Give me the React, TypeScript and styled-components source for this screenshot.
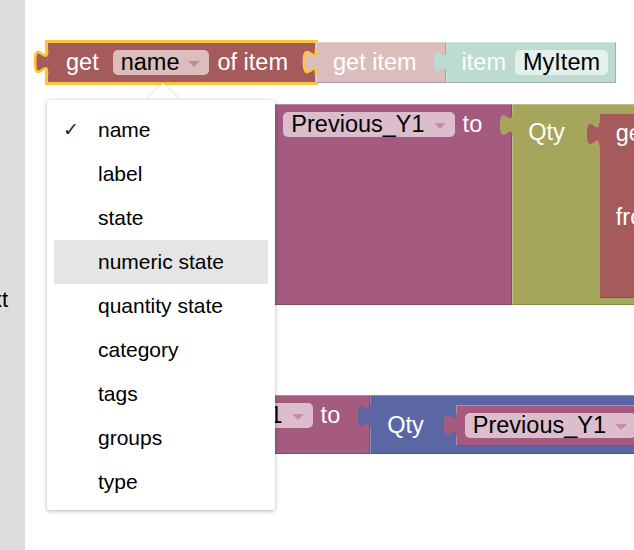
import React from 'react'
import styled, { createGlobalStyle, css } from 'styled-components'

const GlobalStyle = createGlobalStyle`
  html, body {
    margin: 0;
    padding: 0;
    background: #fff;
    overflow: hidden;
  }
  body {
    font-family: "Liberation Sans", Arial, sans-serif;
  }
`

const SELECT = '#fbc53c'

const Page = styled.div`
  display: flex;
  width: 634px;
  height: 550px;
  overflow: hidden;
`

const Toolbox = styled.div`
  width: 25px;
  flex-shrink: 0;
  background: #dddddd;
  padding-top: 288px;
  box-sizing: border-box;
  overflow: hidden;
`

const Category = styled.div`
  display: flex;
  justify-content: flex-end;
  padding-right: 17px;
  font-size: 22px;
  line-height: 24px;
  color: #000;
  white-space: nowrap;
`

const Workspace = styled.div`
  flex: 1;
  position: relative;
  z-index: 0;
  background: #fff;
  overflow: hidden;
`

// a stack of blocks, placed where it sits on the canvas
const Placed = styled.div<{ $x: number; $y: number }>`
  position: absolute;
  left: ${({ $x }) => $x}px;
  top: ${({ $y }) => $y}px;
  display: flex;
  align-items: stretch;
`

const Block = styled.div<{
  $color: string
  $h?: number
  $w?: number
  $selected?: boolean
  $align?: string
  $pad?: string
}>`
  position: relative;
  display: flex;
  align-items: ${({ $align }) => $align || 'center'};
  flex-shrink: 0;
  box-sizing: border-box;
  background: ${({ $color }) => $color};
  height: ${({ $h }) => ($h ? `${$h}px` : 'auto')};
  ${({ $w }) => $w && css`width: ${$w}px;`}
  padding: ${({ $pad }) => $pad || '0'};
  box-shadow: inset 1px 1px 0 rgba(255, 255, 255, 0.28),
    inset -1px -1px 0 rgba(0, 0, 0, 0.18);
  ${({ $selected }) =>
    $selected &&
    css`
      box-shadow: 0 0 0 2px ${SELECT}, inset 0 0 0 1px ${SELECT};
    `}
`

const Column = styled.div`
  display: flex;
  flex-direction: column;
`

const Label = styled.span<{ $ml?: number; $mt?: number }>`
  display: block;
  color: #fff;
  font-size: 23.5px;
  line-height: 25px;
  white-space: nowrap;
  margin-left: ${({ $ml }) => $ml || 0}px;
  margin-top: ${({ $mt }) => $mt || 0}px;
`

const Pill = styled.span<{ $bg: string; $ml?: number; $pr?: number }>`
  display: inline-flex;
  align-items: center;
  flex-shrink: 0;
  height: 25px;
  padding: 0 ${({ $pr }) => $pr ?? 9}px 0 8px;
  margin-left: ${({ $ml }) => $ml || 0}px;
  border-radius: 5px;
  background: ${({ $bg }) => $bg};
  color: #000;
  font-size: 23.5px;
  line-height: 25px;
  white-space: nowrap;
`

const Arrow = styled.span<{ $color: string }>`
  width: 0;
  height: 0;
  margin-left: 9px;
  margin-top: 2px;
  border-left: 6px solid transparent;
  border-right: 6px solid transparent;
  border-top: 6px solid ${({ $color }) => $color};
`

const TabSvg = styled.svg<{ $top: number }>`
  position: absolute;
  left: -12px;
  top: ${({ $top }) => $top}px;
  overflow: visible;
`

const Tab = ({ color, top = 8, stroke }: { color: string; top?: number; stroke?: string }) => (
  <TabSvg $top={top} width="12" height="24" viewBox="0 0 8 15">
    <path d="M8.6,0 L8,0 c0,10 -8,-8 -8,7.5 s8,-2.5 8,7.5 L8.6,15 Z" fill={color} />
    {stroke && (
      <path
        d="M8,-0.6 L8,0 c0,10 -8,-8 -8,7.5 s8,-2.5 8,7.5 L8,15.6"
        fill="none"
        stroke={stroke}
        strokeWidth="1.9"
      />
    )}
  </TabSvg>
)

const Menu = styled.div`
  position: absolute;
  left: 22px;
  top: 100px;
  width: 228px;
  z-index: 10;
`

const Notch = styled.div`
  position: absolute;
  left: 104px;
  top: -12px;
  width: 24px;
  height: 24px;
  background: #fff;
  transform: rotate(45deg);
  box-shadow: 0 0 3px rgba(0, 0, 0, 0.22);
`

const MenuList = styled.div`
  position: relative;
  background: #fff;
  border-radius: 3px;
  padding: 8px 7px 6px;
  box-shadow: 0 1px 4px rgba(0, 0, 0, 0.3);
`

const MenuItem = styled.div<{ $active?: boolean }>`
  position: relative;
  display: flex;
  align-items: center;
  height: 44px;
  padding-left: 44px;
  font-size: 21px;
  color: #000;
  background: ${({ $active }) => ($active ? '#e5e5e5' : 'transparent')};
`

const Check = styled.span`
  position: absolute;
  left: 9px;
  top: 10px;
  font-family: "DejaVu Sans", sans-serif;
  font-size: 19px;
  line-height: 22px;
  font-weight: bold;
  color: #222;
`

const RED = '#a55b5b'
const MAGENTA = '#a55b80'
const OLIVE = '#a5a55b'
const BLUE = '#5b67a5'
const RED_SHADOW = '#dbbdbd'
const TEAL_SHADOW = '#bddbd1'

const options = [
  'name',
  'label',
  'state',
  'numeric state',
  'quantity state',
  'category',
  'tags',
  'groups',
  'type',
]

const App = () => {
  return (
    <>
      <GlobalStyle />
      <Page>
        <Toolbox>
          <Category>Text</Category>
        </Toolbox>
        <Workspace>
          <Placed $x={22} $y={42}>
            <Block $color={RED} $h={41} $selected $pad="0 28px 0 0">
              <Tab color={RED} stroke={SELECT} />
              <Label $ml={19}>get</Label>
              <Pill $bg={RED_SHADOW} $ml={14}>
                name
                <Arrow $color="#c58c8c" />
              </Pill>
              <Label $ml={8}>of item</Label>
            </Block>
            <Block $color={RED_SHADOW} $h={41} $pad="0 29px 0 0">
              <Tab color={RED_SHADOW} stroke={SELECT} />
              <Label $ml={17}>get item</Label>
            </Block>
            <Block $color={TEAL_SHADOW} $h={41} $pad="0 8px 0 0">
              <Tab color={TEAL_SHADOW} />
              <Label $ml={16}>item</Label>
              <Pill $bg="#e4f0ec" $ml={9} $pr={8}>
                MyItem
              </Pill>
            </Block>
          </Placed>

          <Placed $x={196} $y={104}>
            <Block $color={MAGENTA} $align="flex-start" $pad="8px 30px 0 0">
              <Label $ml={16}>set</Label>
              <Pill $bg="#dbbdcc" $ml={15}>
                Previous_Y1
                <Arrow $color="#c88ca8" />
              </Pill>
              <Label $ml={8}>to</Label>
            </Block>
            <Block $color={OLIVE} $align="flex-start" $pad="9px 0 7px 0">
              <Tab color={OLIVE} top={9} />
              <Label $ml={16} $mt={7}>Qty</Label>
              <Block
                $color={RED}
                $h={185}
                $w={220}
                $align="flex-start"
                style={{ marginLeft: 34 }}
              >
                <Tab color={RED} top={9} />
                <Column>
                  <Label $ml={17} $mt={8}>get</Label>
                  <Label $ml={17} $mt={59}>from</Label>
                </Column>
              </Block>
            </Block>
          </Placed>

          <Placed $x={54} $y={395}>
            <Block $color={MAGENTA} $align="flex-start" $pad="8px 30px 0 0">
              <Label $ml={16}>set</Label>
              <Pill $bg="#dbbdcc" $ml={15}>
                Previous_Y1
                <Arrow $color="#c88ca8" />
              </Pill>
              <Label $ml={8}>to</Label>
            </Block>
            <Block $color={BLUE} $pad="10px 0 8px 0" $w={300}>
              <Tab color={BLUE} top={9} />
              <Label $ml={17}>Qty</Label>
              <Block $color={MAGENTA} $h={41} $w={220} style={{ marginLeft: 32 }}>
                <Tab color={MAGENTA} />
                <Pill $bg="#dbbdcc" $ml={9}>
                  Previous_Y1
                  <Arrow $color="#c88ca8" />
                </Pill>
              </Block>
            </Block>
          </Placed>

          <Menu>
            <Notch />
            <MenuList>
              {options.map((o, i) => (
                <MenuItem key={o} $active={o === 'numeric state'}>
                  {i === 0 && <Check>✓</Check>}
                  {o}
                </MenuItem>
              ))}
            </MenuList>
          </Menu>
        </Workspace>
      </Page>
    </>
  )
}

export default App
